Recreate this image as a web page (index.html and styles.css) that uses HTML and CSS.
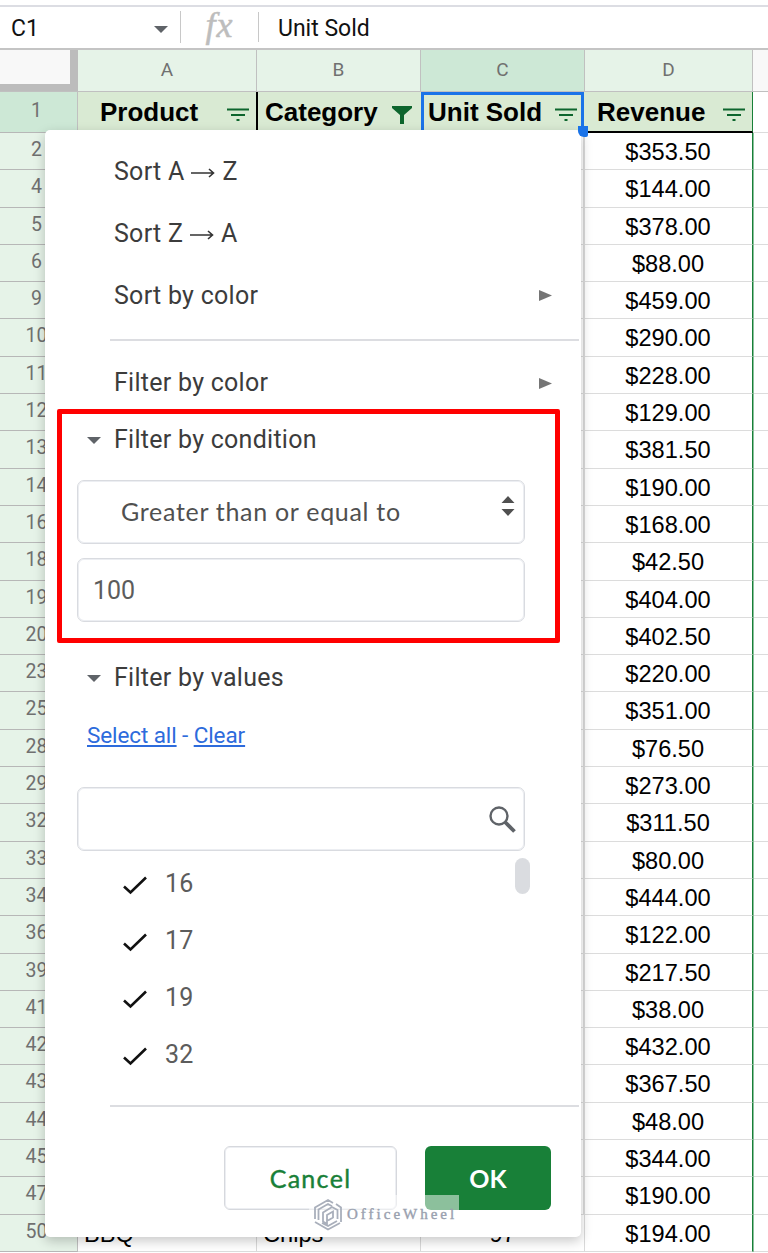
FILE: index.html
```html
<!DOCTYPE html>
<html lang="en">
<head>
  <meta charset="UTF-8">
  <meta name="viewport" content="width=device-width, initial-scale=1.0">
  <title>Filter by condition</title>
  <link rel="stylesheet" href="styles.css">
</head>
<body>
  <!-- Formula bar -->
  <div class="formula-bar">
    <div class="name-box">
      <span>C1</span>
      <svg width="14" height="8" viewBox="0 0 14 8"><path d="M0 0h14L7 7z" fill="#5f6368"/></svg>
    </div>
    <div class="fx">fx</div>
    <div class="formula"><span>Unit Sold</span></div>
  </div>

  <!-- Column letters -->
  <div class="columns">
    <div class="corner"></div>
    <div class="col col-a">A</div>
    <div class="col col-b">B</div>
    <div class="col col-c">C</div>
    <div class="col col-d">D</div>
    <div class="col-e"></div>
  </div>

  <!-- Header row -->
  <div class="head-row">
    <div class="num">1</div>
    <div class="head col-a"><span>Product</span>
      <svg class="lines" width="22" height="13" viewBox="0 0 22 13"><path d="M0 1.500h22M4 7h14M9.500 12h3" stroke="#0d652d" stroke-width="1.8"/></svg>
    </div>
    <div class="head col-b"><span>Category</span>
      <svg class="funnel" width="20" height="18" viewBox="0 0 20 18"><path d="M0 0h20v2l-8 7v9H8V9L0 2z" fill="#0d652d"/></svg>
    </div>
    <div class="head col-c"><span>Unit Sold</span>
      <svg class="lines" width="22" height="13" viewBox="0 0 22 13"><path d="M0 1.500h22M4 7h14M9.500 12h3" stroke="#0d652d" stroke-width="1.8"/></svg>
    </div>
    <div class="head col-d"><span>Revenue</span>
      <svg class="lines" width="22" height="13" viewBox="0 0 22 13"><path d="M0 1.500h22M4 7h14M9.500 12h3" stroke="#0d652d" stroke-width="1.8"/></svg>
    </div>
    <div class="col-e"></div>
  </div>

  <!-- Data -->
  <div class="rows">
    <div class="row"><div class="num">2</div><div class="gap"></div><div class="val">$353.50</div><div class="rest"></div></div>
    <div class="row"><div class="num">4</div><div class="gap"></div><div class="val">$144.00</div><div class="rest"></div></div>
    <div class="row"><div class="num">5</div><div class="gap"></div><div class="val">$378.00</div><div class="rest"></div></div>
    <div class="row"><div class="num">6</div><div class="gap"></div><div class="val">$88.00</div><div class="rest"></div></div>
    <div class="row"><div class="num">9</div><div class="gap"></div><div class="val">$459.00</div><div class="rest"></div></div>
    <div class="row"><div class="num">10</div><div class="gap"></div><div class="val">$290.00</div><div class="rest"></div></div>
    <div class="row"><div class="num">11</div><div class="gap"></div><div class="val">$228.00</div><div class="rest"></div></div>
    <div class="row"><div class="num">12</div><div class="gap"></div><div class="val">$129.00</div><div class="rest"></div></div>
    <div class="row"><div class="num">13</div><div class="gap"></div><div class="val">$381.50</div><div class="rest"></div></div>
    <div class="row"><div class="num">14</div><div class="gap"></div><div class="val">$190.00</div><div class="rest"></div></div>
    <div class="row"><div class="num">16</div><div class="gap"></div><div class="val">$168.00</div><div class="rest"></div></div>
    <div class="row"><div class="num">18</div><div class="gap"></div><div class="val">$42.50</div><div class="rest"></div></div>
    <div class="row"><div class="num">19</div><div class="gap"></div><div class="val">$404.00</div><div class="rest"></div></div>
    <div class="row"><div class="num">20</div><div class="gap"></div><div class="val">$402.50</div><div class="rest"></div></div>
    <div class="row"><div class="num">23</div><div class="gap"></div><div class="val">$220.00</div><div class="rest"></div></div>
    <div class="row"><div class="num">25</div><div class="gap"></div><div class="val">$351.00</div><div class="rest"></div></div>
    <div class="row"><div class="num">28</div><div class="gap"></div><div class="val">$76.50</div><div class="rest"></div></div>
    <div class="row"><div class="num">29</div><div class="gap"></div><div class="val">$273.00</div><div class="rest"></div></div>
    <div class="row"><div class="num">32</div><div class="gap"></div><div class="val">$311.50</div><div class="rest"></div></div>
    <div class="row"><div class="num">33</div><div class="gap"></div><div class="val">$80.00</div><div class="rest"></div></div>
    <div class="row"><div class="num">34</div><div class="gap"></div><div class="val">$444.00</div><div class="rest"></div></div>
    <div class="row"><div class="num">36</div><div class="gap"></div><div class="val">$122.00</div><div class="rest"></div></div>
    <div class="row"><div class="num">39</div><div class="gap"></div><div class="val">$217.50</div><div class="rest"></div></div>
    <div class="row"><div class="num">41</div><div class="gap"></div><div class="val">$38.00</div><div class="rest"></div></div>
    <div class="row"><div class="num">42</div><div class="gap"></div><div class="val">$432.00</div><div class="rest"></div></div>
    <div class="row"><div class="num">43</div><div class="gap"></div><div class="val">$367.50</div><div class="rest"></div></div>
    <div class="row"><div class="num">44</div><div class="gap"></div><div class="val">$48.00</div><div class="rest"></div></div>
    <div class="row"><div class="num">45</div><div class="gap"></div><div class="val">$344.00</div><div class="rest"></div></div>
    <div class="row"><div class="num">47</div><div class="gap"></div><div class="val">$190.00</div><div class="rest"></div></div>
    <div class="row">
      <div class="num">50</div>
      <div class="cell col-a">BBQ</div>
      <div class="cell col-b">Chips</div>
      <div class="cell col-c center">97</div>
      <div class="val">$194.00</div>
      <div class="rest"></div>
    </div>
  </div>

  <!-- Filter menu -->
  <div class="menu">
    <div class="item"><span>Sort A <svg class="arrow" width="24" height="10" viewBox="0 0 24 10"><path d="M0 5h22M18 1l4.500 4L18 9" fill="none" stroke="#333" stroke-width="1.6"/></svg> Z</span></div>
    <div class="item"><span>Sort Z <svg class="arrow" width="24" height="10" viewBox="0 0 24 10"><path d="M0 5h22M18 1l4.500 4L18 9" fill="none" stroke="#333" stroke-width="1.6"/></svg> A</span></div>
    <div class="item"><span>Sort by color</span>
      <svg class="sub" width="13" height="11" viewBox="0 0 13 11"><path d="M0 0l13 5.500L0 11z" fill="#757575"/></svg>
    </div>
    <div class="divider"></div>
    <div class="item short"><span>Filter by color</span>
      <svg class="sub" width="13" height="11" viewBox="0 0 13 11"><path d="M0 0l13 5.500L0 11z" fill="#757575"/></svg>
    </div>
    <div class="item short open">
      <svg class="caret" width="14" height="8" viewBox="0 0 14 8"><path d="M0 0h14L7 7z" fill="#5f6368"/></svg>
      <span>Filter by condition</span>
    </div>
    <div class="field select">
      <span>Greater than or equal to</span>
      <svg width="14" height="20" viewBox="0 0 14 20"><path d="M7 0l6.500 7h-13zM7 20l6.500-7h-13z" fill="#505050"/></svg>
    </div>
    <div class="field input"><span>100</span></div>
    <div class="item short open values">
      <svg class="caret" width="14" height="8" viewBox="0 0 14 8"><path d="M0 0h14L7 7z" fill="#5f6368"/></svg>
      <span>Filter by values</span>
    </div>
    <div class="links"><u>Select all</u> - <u>Clear</u></div>
    <div class="field search">
      <svg width="27" height="27" viewBox="0 0 27 27" fill="none" stroke="#5f6368"><circle cx="10" cy="10" r="8.500" stroke-width="2.4"/><path d="M16 16l9.500 9.500" stroke-width="3.8"/></svg>
    </div>
    <div class="list">
      <div class="options">
        <div class="option"><svg width="24" height="19" viewBox="0 0 24 19"><path d="M1 10.500l6.500 6L23 1.500" fill="none" stroke="#111" stroke-width="2.6"/></svg><span>16</span></div>
        <div class="option"><svg width="24" height="19" viewBox="0 0 24 19"><path d="M1 10.500l6.500 6L23 1.500" fill="none" stroke="#111" stroke-width="2.6"/></svg><span>17</span></div>
        <div class="option"><svg width="24" height="19" viewBox="0 0 24 19"><path d="M1 10.500l6.500 6L23 1.500" fill="none" stroke="#111" stroke-width="2.6"/></svg><span>19</span></div>
        <div class="option"><svg width="24" height="19" viewBox="0 0 24 19"><path d="M1 10.500l6.500 6L23 1.500" fill="none" stroke="#111" stroke-width="2.6"/></svg><span>32</span></div>
      </div>
      <div class="thumb"></div>
    </div>
    <div class="divider last"></div>
    <div class="buttons">
      <div class="btn cancel">Cancel</div>
      <div class="btn ok">OK</div>
    </div>
  </div>

  <div class="handle"></div>
  <div class="highlight"></div>

  <!-- Watermark -->
  <div class="watermark">
    <svg width="30" height="33" viewBox="0 0 30 33" fill="none" stroke="#a9afbb" stroke-width="1.8">
      <path d="M2 21V9.500L15 2l5 3M5.500 22V11.500L15 6l4 2.300M23 6l5 3.500V24M24.500 21V12L19 9l-9 5.500v9l4 2.300V17l6-3.500v6L15 22.500M2 24l13 7.500L27 25M9 25l6 3 9-5"/>
    </svg>
    <span>OfficeWheel</span>
  </div>
</body>
</html>
```

FILE: styles.css
```css
/* General Styles */
* {
  box-sizing: border-box;
}

body {
  margin: 0;
  width: 768px;
  height: 1253px;
  overflow: hidden;
  position: relative;
  background: #fff;
  font-family: Roboto, 'Liberation Sans', sans-serif;
}

svg {
  display: block;
  flex: none;
}

/* Formula bar */
.formula-bar {
  display: flex;
  align-items: center;
  height: 50px;
  padding-top: 6px;
  border-bottom: 2px solid #c4c4c4;
  background: linear-gradient(#dcdde3, #dcdde3) 0 5px / 100% 2px no-repeat;
  font-size: 23px;
  color: #111;
}

.name-box {
  display: flex;
  justify-content: space-between;
  align-items: center;
  width: 181px;
  height: 32px;
  padding: 2px 12px 0 11px;
  border-right: 1px solid #c8c8c8;
}

.name-box svg {
  margin-top: 3px;
}

.fx {
  width: 78px;
  height: 30px;
  border-right: 1px solid #c8c8c8;
  text-align: center;
  font: italic 36px/26px 'Liberation Serif', serif;
  letter-spacing: 1px;
  color: #bdbdbd;
  -webkit-text-stroke: 0.5px #bdbdbd;
}

.formula {
  padding: 2px 0 0 19px;
}

/* Column letters */
.columns {
  display: flex;
  height: 42px;
  border-bottom: 1px solid #c0c0c0;
}

.corner {
  width: 78px;
  border-right: 8px solid #bcbcbc;
  border-bottom: 7px solid #bcbcbc;
  background: #f8f8f8;
}

.col {
  border-right: 1px solid #c0c0c0;
  background: #e6f3e8;
  text-align: center;
  font-size: 19px;
  line-height: 40px;
  color: #707070;
}

.col-a {
  width: 179px;
}

.col-b {
  width: 164px;
}

.col-c {
  width: 164px;
}

.col-d {
  width: 168px;
}

.col.col-c {
  background: #cde8d6;
}

.col-e {
  flex: 1;
  background: #f8f8f8;
}

/* Header row */
.head-row {
  display: flex;
  height: 41px;
}

.num {
  width: 78px;
  padding-right: 4px;
  border-right: 1px solid #c0c0c0;
  border-bottom: 1px solid #b7b7b7;
  background: #e6f3e8;
  text-align: center;
  font-size: 19.5px;
  line-height: 34px;
  color: #707070;
}

.head-row .num {
  background: #cde8d6;
  line-height: 38px;
}

.head {
  display: flex;
  justify-content: space-between;
  padding: 0 7px 0 22px;
  border-bottom: 2px solid #000;
  background: #d9ead3;
  font: bold 26px/41px 'Liberation Sans', sans-serif;
}

.head.col-a {
  width: 180px;
  border-right: 2px solid #000;
}

.head .lines {
  margin-top: 16px;
}

.head .funnel {
  margin-top: 14px;
}

.head.col-b {
  width: 163px;
  padding: 0 9px 0 7px;
}

.head.col-c {
  width: 163px;
  padding: 0 4px 0 4px;
  border: 3px solid #1a73e8;
  border-bottom: 0;
  line-height: 35px;
}

.head.col-c .lines {
  margin-top: 13px;
}

.head.col-d {
  width: 169px;
  padding: 0 7px 0 13px;
  border-right: 1px solid #188038;
}

.head-row .col-e {
  border-bottom: 1px solid #dcdcdc;
  background: #fff;
}

/* Data rows */
.row {
  display: flex;
  height: 37.31px;
}

.gap {
  width: 507px;
  border-right: 2px solid #dadada;
  border-bottom: 1px solid #dcdcdc;
}

.val,
.cell {
  border-bottom: 1px solid #dcdcdc;
  font: 23.6px/38px 'Liberation Sans', sans-serif;
  color: #000;
}

.val {
  width: 168px;
  padding-right: 1px;
  border-right: 1px solid #188038;
  box-shadow: 1px 0 0 #8cc09c;
  text-align: center;
}

.cell {
  padding-left: 6px;
  border-right: 1px solid #dadada;
}

.center {
  padding-left: 0;
  text-align: center;
}

.rest {
  flex: 1;
  margin-left: 1px;
  border-bottom: 1px solid #dcdcdc;
}

/* Filter menu */
.menu {
  position: absolute;
  left: 45px;
  top: 130px;
  width: 536px;
  height: 1107px;
  padding-top: 10px;
  border-radius: 5px;
  background: #fff;
  box-shadow: 0 4px 12px rgba(0, 0, 0, 0.22);
  font-size: 25px;
  letter-spacing: 0.27px;
  color: #3c3c3c;
}

.item {
  display: flex;
  justify-content: space-between;
  align-items: center;
  height: 62px;
  padding: 0 29px 0 69px;
}

.short {
  height: 57px;
}

.open {
  justify-content: flex-start;
  gap: 13px;
  padding-left: 42px;
}

.caret {
  margin-top: 2px;
}

.sub {
  margin-top: 1px;
}

.arrow {
  display: inline-block;
  margin-right: 1px;
  vertical-align: 2px;
}

.divider {
  height: 2px;
  margin: 13px 2px 13px 65px;
  background: #dcdde1;
}

.field {
  display: flex;
  align-items: center;
  width: 448px;
  height: 64px;
  margin-left: 32px;
  border: 1px solid #d9dbe0;
  border-radius: 7px;
  box-shadow: inset 0 0 0 1px #eceef2;
}

.select {
  justify-content: space-between;
  margin-top: 12px;
  padding: 0 9px 2px 43px;
  font-family: Lato, sans-serif;
  letter-spacing: 0.7px;
  color: #505050;
}

.select svg {
  margin-bottom: 10px;
}

.input {
  margin-top: 14px;
  padding-left: 15px;
  letter-spacing: 0;
  color: #5c5c5c;
}

.values {
  margin-top: 27px;
}

.links {
  height: 58px;
  padding-left: 42px;
  font-size: 22.5px;
  letter-spacing: -0.1px;
  line-height: 58px;
  color: #2d6bdc;
}

.links u {
  text-decoration-thickness: 2px;
  text-underline-offset: 2px;
}

.search {
  justify-content: flex-end;
  margin-top: 23px;
  padding-right: 8px;
}

.list {
  display: flex;
  justify-content: space-between;
  margin-top: 4px;
  padding: 0 51px 0 78px;
}

.option {
  display: flex;
  align-items: center;
  gap: 18px;
  height: 57px;
  color: #5c5c5c;
}

.option svg {
  margin-top: 3px;
}

.thumb {
  width: 15px;
  height: 36px;
  margin-top: 3px;
  border-radius: 8px;
  background: #dadce0;
}

.last {
  margin-top: 22px;
}

/* Buttons */
.buttons {
  display: flex;
  justify-content: flex-end;
  gap: 28px;
  margin-top: 39px;
  padding-right: 30px;
}

.btn {
  height: 64px;
  border-radius: 6px;
  text-align: center;
  font-family: Lato, sans-serif;
  font-size: 25px;
  line-height: 64px;
}

.cancel {
  width: 173px;
  border: 1px solid #d6d8dd;
  box-shadow: inset 0 0 0 1px #eceef2;
  line-height: 62px;
  letter-spacing: 1.3px;
  color: #188038;
  -webkit-text-stroke: 0.4px #188038;
}

.ok {
  width: 126px;
  background: #188038;
  font-weight: bold;
  letter-spacing: 0;
  color: #fff;
}

/* Selection handle */
.handle {
  position: absolute;
  left: 578px;
  top: 126px;
  width: 10px;
  height: 11px;
  border-radius: 0 0 2px 6px;
  background: #1a73e8;
}

/* Red frame around the condition */
.highlight {
  position: absolute;
  left: 57px;
  top: 409px;
  width: 503px;
  height: 234px;
  border: 5px solid #f00;
  border-radius: 2px;
}

/* Watermark */
.watermark {
  position: absolute;
  left: 309px;
  top: 1195px;
  width: 150px;
  height: 38px;
  display: flex;
  align-items: center;
  padding-left: 4px;
  background: rgba(255, 255, 255, 0.5);
  font: 15px 'Liberation Serif', serif;
  letter-spacing: 3px;
  color: #9aa1af;
  -webkit-text-stroke: 0.4px #9aa1af;
}

.watermark span {
  margin-left: 4px;
}
```
